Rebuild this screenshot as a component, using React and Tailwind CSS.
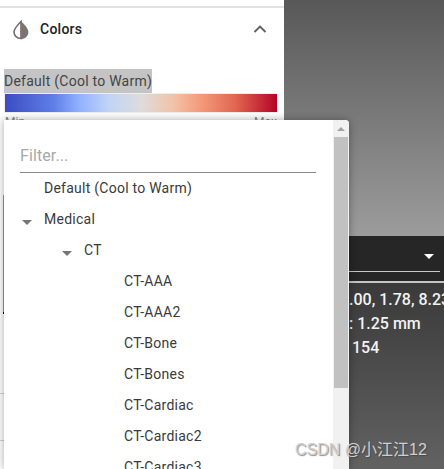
import React from 'react';

const presets = [
    { label: 'Default (Cool to Warm)', depth: 0 },
    { label: 'Medical', depth: 0, open: true },
    { label: 'CT', depth: 1, open: true },
    { label: 'CT-AAA', depth: 2 },
    { label: 'CT-AAA2', depth: 2 },
    { label: 'CT-Bone', depth: 2 },
    { label: 'CT-Bones', depth: 2 },
    { label: 'CT-Cardiac', depth: 2 },
    { label: 'CT-Cardiac2', depth: 2 },
    { label: 'CT-Cardiac3', depth: 2 },
];

const DropIcon = () => (
    <svg width="18" height="20" viewBox="0 0 18 20">
        <path d="M9 1.5 L9 18.5 C5 18.5 2 15.6 2 12 C2 8.5 5.5 5 9 1.5 Z" fill="#fff" stroke="#6f6f6f" strokeWidth="1.6" />
        <path d="M9 1 C12.6 4.8 16.4 8.4 16.4 12 C16.4 15.8 13 19.2 9 19.2 Z" fill="#757575" />
        <path d="M9 3 L9 18" stroke="#b5664f" strokeWidth="0.8" />
    </svg>
);

const TreeRow = ({ item }) => {
    const indent = ['pl-[18px]', 'pl-[58px]', 'pl-[98px]'][item.depth];
    return (
        <div className={`flex h-[31px] shrink-0 items-center text-[14px] tracking-[0.25px] text-[#3a3a3a] ${indent}`}>
            <span className="flex w-[22px] shrink-0 items-center pt-[6px]">
                {item.open && <span className="h-0 w-0 border-x-[5px] border-t-[5px] border-x-transparent border-t-[#757575]"></span>}
            </span>
            <span>{item.label}</span>
        </div>
    );
};

const App = () => {
    return (
        <div className="relative flex h-[469px] w-[444px] overflow-hidden font-['Roboto',sans-serif]">
            {/* Left panel */}
            <div className="flex w-[284px] shrink-0 flex-col bg-white">
                <div className="mt-[6px] h-[2px] bg-[#e2e2e2]"></div>
                <div className="flex h-[44px] items-center pl-[12px] pr-[17px]">
                    <DropIcon />
                    <span className="ml-[10px] pb-[2px] text-[14px] font-medium tracking-[0.25px] text-[#222]">Colors</span>
                    <svg className="mb-[2px] ml-auto" width="14" height="10" viewBox="0 0 14 10">
                        <path d="M1.5 8 L7 2.5 L12.5 8" fill="none" stroke="#5f5f5f" strokeWidth="1.8" />
                    </svg>
                </div>
                <div className="mt-[17px] flex pl-[4px]">
                    <span className="h-[24px] bg-[#c4c4c4] text-[14px] leading-[24px] tracking-[0.25px] text-[#444]">Default (Cool to Warm)</span>
                </div>
                <div className="ml-[4px] mr-[6px] h-[20px] shrink-0 border border-[#eeeeee] bg-[linear-gradient(to_right,#3b4cc0,#5f7fe8_18%,#8fb0ff_27%,#c0d4f5_38%,#dddcdc_50%,#f2c2a8_62%,#f49a7b_72%,#e0654f_85%,#b40426_100%)]"></div>
                <div className="mx-[5px] mt-[2px] flex justify-between text-[12px] leading-[14px] text-[#888]">
                    <span>Min</span>
                    <span className="pr-[2px]">Max</span>
                </div>
                <div className="ml-[3px] mt-[66px] flex h-[119px] w-px shrink-0 flex-col justify-end bg-[#9a9a9a]">
                    <div className="h-[2px] bg-black"></div>
                </div>
                <div className="mt-[79px] h-px shrink-0 bg-[#d0d0d0]"></div>
                <div className="mt-[46px] h-px shrink-0 bg-[#d0d0d0]"></div>
            </div>

            {/* Right viewport */}
            <div className="flex min-w-0 flex-1 flex-col">
                <div className="h-[236px] shrink-0 bg-[linear-gradient(to_bottom,#585858,#9c9c9c)]"></div>
                <div className="flex h-[45px] shrink-0 flex-col bg-[#262626] pl-[65px] pr-[4px]">
                    <div className="flex h-[36px] shrink-0 items-center justify-end border-b border-[#c8c8c8] pr-[6px] pt-[6px]">
                        <span className="h-0 w-0 border-x-[5px] border-t-[5px] border-x-transparent border-t-white"></span>
                    </div>
                </div>
                <div className="h-[2px] shrink-0 bg-[#c4c4c4]"></div>
                <div className="flex flex-1 flex-col bg-[linear-gradient(to_bottom,#3a3a3a,#626262)] pl-[65px] pt-[5px] text-[16px] font-medium leading-[24px] text-[#f2f2f2]">
                    <div className="whitespace-nowrap">.00, 1.78, 8.23</div>
                    <div className="whitespace-nowrap">: 1.25 mm</div>
                    <div className="whitespace-nowrap pl-[3px]">154</div>
                </div>
            </div>

            {/* Preset dropdown */}
            <div className="absolute left-[4px] top-[120px] flex h-[349px] w-[345px] overflow-hidden rounded-tr-[4px] bg-white shadow-[0_0_8px_rgba(0,0,0,0.35)]">
                <div className="flex min-w-0 flex-1 flex-col">
                    <div className="ml-[16px] mr-[17px] mt-[21px] h-[32px] shrink-0 border-b border-[#8a8a8a] text-[16px] leading-[30px] tracking-[0.1px] text-[#a8a8a8]">Filter...</div>
                    <div className="flex flex-col">
                        {presets.map((item) => (
                            <TreeRow key={item.label} item={item} />
                        ))}
                    </div>
                </div>
                <div className="flex w-[16px] shrink-0 flex-col items-center bg-[#f1f1f1]">
                    <div className="flex h-[17px] shrink-0 items-center">
                        <span className="h-0 w-0 border-x-[4px] border-b-[4px] border-x-transparent border-b-[#a3a3a3]"></span>
                    </div>
                    <div className="h-[251px] w-[14px] bg-[#c1c1c1]"></div>
                </div>
            </div>

            {/* Watermark */}
            <div className="absolute left-[295px] top-[440px] whitespace-nowrap font-['Liberation_Sans','Noto_Sans_CJK_SC',sans-serif] text-[16px] leading-[20px] text-[#cfcfcf] [text-shadow:1px_1px_1px_rgba(60,60,60,0.6)]">CSDN @小江江12</div>
        </div>
    );
};

export default App;
